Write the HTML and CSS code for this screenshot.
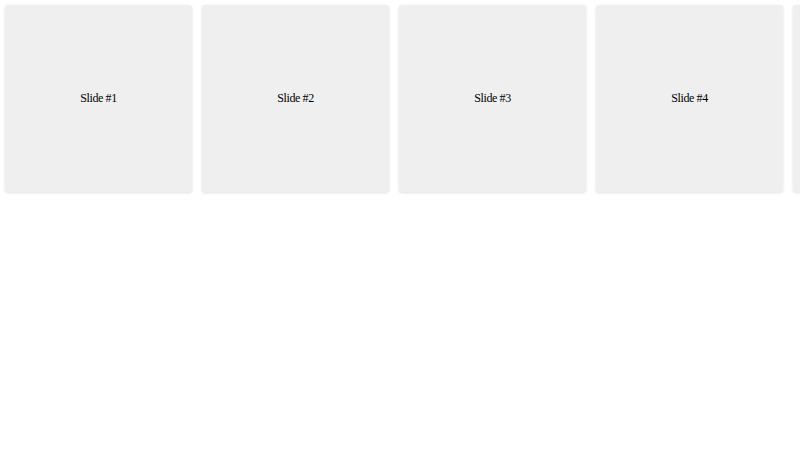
FILE: index.html
```html
<!DOCTYPE html>
<html>
<head>
<meta charset="utf-8">
<link rel="stylesheet" href="styles.css">
</head>
<body>
<div class="carousel">
  <div class="track">
    <div class="slide">Slide #1</div>
    <div class="slide">Slide #2</div>
    <div class="slide">Slide #3</div>
    <div class="slide">Slide #4</div>
    <div class="slide">Slide #5</div>
  </div>
</div>
</body>
</html>
```
FILE: styles.css
```css
html, body {
  margin: 0;
  padding: 0;
  background: #ffffff;
}
.carousel {
  width: 800px;
  overflow: hidden;
}
.track {
  display: flex;
  gap: 10px;
  padding: 5px;
}
.slide {
  flex: 0 0 187px;
  height: 187px;
  background: #efefef;
  border-radius: 3px;
  box-shadow: 0 1px 3px rgba(0, 0, 0, 0.12);
  display: flex;
  align-items: center;
  justify-content: center;
  font-family: "Liberation Serif", "Times New Roman", serif;
  font-size: 12px;
  letter-spacing: -0.4px;
  color: #000;
}
```
